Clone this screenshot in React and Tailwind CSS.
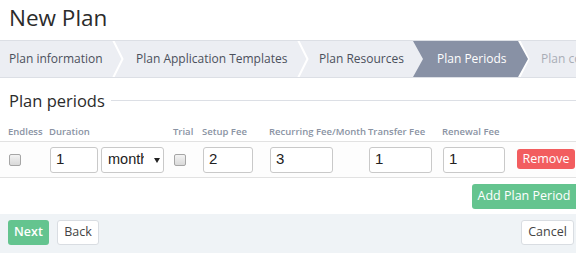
import React from "react";

function Sep({ after }) {
  return (
    <svg
      width="12"
      height="36"
      viewBox="0 0 12 36"
      className={"shrink-0 block" + (after ? " -ml-[10px]" : "")}
    >
      <polyline points="1,-1 10.5,18 1,37" fill="none" stroke="#ffffff" strokeWidth="2" />
    </svg>
  );
}

function Checkbox() {
  return (
    <div className="w-[12px] h-[12px] rounded-[2px] border border-[#a6a6a6] bg-gradient-to-b from-[#f3f3f3] to-[#d9d9d9]" />
  );
}

function Input({ value, w }) {
  return (
    <div
      className={
        "h-[26px] border border-[#c9c9c9] rounded-[3px] bg-white flex items-center pl-[5px] font-['Liberation_Sans',Arial,sans-serif] text-[15px] text-[#222] " +
        w
      }
    >
      {value}
    </div>
  );
}

export default function App() {
  return (
    <div className="w-[576px] h-[253px] overflow-hidden bg-white font-['Open_Sans',sans-serif] text-[#333]">
      <div className="h-[40px] pl-[9px]">
        <h1 className="text-[22.5px] leading-[36px] text-[#2b2b2b]">New Plan</h1>
      </div>

      <nav className="flex h-[38px] border-y border-[#dcdfe5] bg-[#eceef3] text-[12px] text-[#4b505c] whitespace-nowrap">
        <div className="w-[112px] shrink-0 pl-[9px] flex items-center">Plan information</div>
        <Sep />
        <div className="w-[173px] shrink-0 pl-[12px] flex items-center">Plan Application Templates</div>
        <Sep />
        <div className="w-[104px] shrink-0 pl-[10px] flex items-center">Plan Resources</div>
        <div className="w-[115px] shrink-0 pl-[24px] flex items-center bg-[#8891a5] text-white [clip-path:polygon(0_0,105px_0,115px_50%,105px_100%,0_100%,10px_50%)]">
          Plan Periods
        </div>
        <Sep after />
        <div className="pl-[11px] flex items-center text-[#a9adb6]">Plan configuration</div>
      </nav>

      <div className="mt-[11px] flex items-center pl-[9px]">
        <h2 className="text-[16.5px] text-[#2b2b2b] leading-[23px]">Plan periods</h2>
        <div className="flex-1 h-px bg-[#dcdfe5] ml-[6px]" />
      </div>

      <div className="mt-[13px] grid grid-cols-[41px_124px_29px_67px_99px_74px_75px_59px] pl-[8px] h-[16px] items-start text-[9.5px] font-semibold text-[#8a93a3] leading-[14px] whitespace-nowrap">
        <div>Endless</div>
        <div>Duration</div>
        <div>Trial</div>
        <div>Setup Fee</div>
        <div>Recurring Fee/Month</div>
        <div>Transfer Fee</div>
        <div>Renewal Fee</div>
        <div></div>
      </div>

      <div className="border-y border-[#e2e2e2] bg-[#fdfdfd] h-[37px] grid grid-cols-[41px_124px_29px_67px_99px_74px_75px_59px] pl-[8px] items-center">
        <div className="pl-[1px] pt-[1px]">
          <Checkbox />
        </div>
        <div className="pl-[1px] flex gap-[3px]">
          <Input value="1" w="w-[48px]" />
          <div className="w-[63px] h-[26px] border border-[#c9c9c9] rounded-[3px] bg-white flex items-center pl-[6px] font-['Liberation_Sans',Arial,sans-serif] text-[14.5px] text-[#222]">
            <div className="w-[36px] overflow-hidden whitespace-nowrap">month</div>
            <svg width="6" height="5" viewBox="0 0 6 5" className="ml-[10px] mt-[1px]">
              <polygon points="0,0 6,0 3,5" fill="#222" />
            </svg>
          </div>
        </div>
        <div className="pl-[1px] pt-[1px]">
          <Checkbox />
        </div>
        <div className="pl-[1px]">
          <Input value="2" w="w-[50px]" />
        </div>
        <div className="pl-[1px]">
          <Input value="3" w="w-[63px]" />
        </div>
        <div className="pl-[1px]">
          <Input value="1" w="w-[63px]" />
        </div>
        <div className="pl-[1px]">
          <Input value="1" w="w-[62px]" />
        </div>
        <div className="flex">
          <button className="w-[58px] h-[20px] rounded-[3px] bg-[#f25d5f] text-white text-[12.5px] leading-[20px] -mt-[2px]">
            Remove
          </button>
        </div>
      </div>

      <div className="flex justify-end mt-[6px]">
        <button className="w-[104px] h-[25px] rounded-l-[3px] bg-[#64c48f] text-white text-[12.5px]">
          Add Plan Period
        </button>
      </div>

      <div className="mt-[5px] h-[39px] bg-[#eff3f6] flex items-start pt-[6px] px-[8px]">
        <button className="w-[41px] h-[25px] rounded-[3px] bg-[#64c48f] text-white text-[12.5px] font-semibold">
          Next
        </button>
        <button className="ml-[8px] w-[42px] h-[25px] rounded-[3px] bg-white border border-[#d9dde2] text-[#444] text-[12.5px]">
          Back
        </button>
        <button className="ml-auto mr-[-6px] w-[53px] h-[25px] rounded-[3px] bg-white border border-[#d9dde2] text-[#444] text-[12.5px]">
          Cancel
        </button>
      </div>
    </div>
  );
}
